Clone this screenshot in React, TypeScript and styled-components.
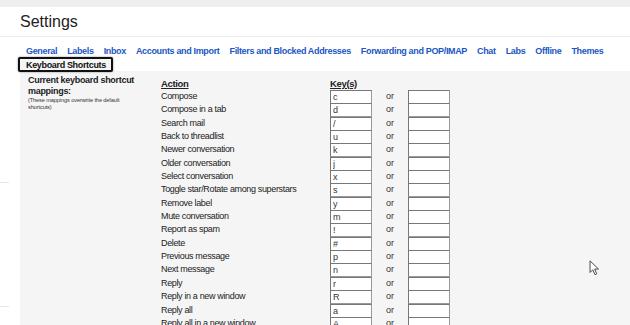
import styled, { createGlobalStyle } from 'styled-components';

const shortcuts: [string, string][] = [
  ['Compose', 'c'],
  ['Compose in a tab', 'd'],
  ['Search mail', '/'],
  ['Back to threadlist', 'u'],
  ['Newer conversation', 'k'],
  ['Older conversation', 'j'],
  ['Select conversation', 'x'],
  ['Toggle star/Rotate among superstars', 's'],
  ['Remove label', 'y'],
  ['Mute conversation', 'm'],
  ['Report as spam', '!'],
  ['Delete', '#'],
  ['Previous message', 'p'],
  ['Next message', 'n'],
  ['Reply', 'r'],
  ['Reply in a new window', 'R'],
  ['Reply all', 'a'],
  ['Reply all in a new window', 'A'],
];

const tabs = [
  'General',
  'Labels',
  'Inbox',
  'Accounts and Import',
  'Filters and Blocked Addresses',
  'Forwarding and POP/IMAP',
  'Chat',
  'Labs',
  'Offline',
  'Themes',
];

const GlobalStyle = createGlobalStyle`
  html, body {
    margin: 0;
    padding: 0;
    background: #ffffff;
    font-family: "Liberation Sans", Arial, sans-serif;
    overflow: hidden;
  }
`;

const App = () => {
  return (
    <>
      <GlobalStyle />
      <Page>
        <TopStrip />
        <Header>Settings</Header>
        <TabBar>
          {tabs.map((t) => (
            <TabLink key={t}>{t}</TabLink>
          ))}
        </TabBar>
        <ActiveTabRow>
          <ActiveTab>Keyboard Shortcuts</ActiveTab>
        </ActiveTabRow>
        <Body>
          <Gutter>
            <GutterLine $top={111} />
            <GutterLine $top={235} />
          </Gutter>
          <Panel>
            <Intro>
              <IntroTitle>Current keyboard shortcut mappings:</IntroTitle>
              <IntroNote>(These mappings overwrite the default shortcuts)</IntroNote>
            </Intro>
            <Table>
              <HeadCell>Action</HeadCell>
              <HeadCell>Key(s)</HeadCell>
              <span />
              <span />
              {shortcuts.map(([action, key]) => (
                <Row key={action}>
                  <ActionCell>{action}</ActionCell>
                  <KeyInput defaultValue={key} />
                  <OrCell>or</OrCell>
                  <KeyInput defaultValue="" />
                </Row>
              ))}
            </Table>
            <Cursor viewBox="0 0 12 18" aria-hidden>
              <path
                d="M1 1 L1 14 L4 11 L6.5 16.5 L8.5 15.6 L6.2 10.2 L10.5 10.2 Z"
                fill="#ffffff"
                stroke="#333333"
                strokeWidth="1"
                strokeLinejoin="round"
              />
            </Cursor>
          </Panel>
        </Body>
      </Page>
    </>
  );
};

const Page = styled.div`
  width: 630px;
  height: 325px;
  overflow: hidden;
  display: flex;
  flex-direction: column;
`;

const TopStrip = styled.div`
  height: 7px;
  background: #efefef;
  flex: none;
`;

const Header = styled.div`
  height: 29px;
  flex: none;
  padding-left: 20px;
  display: flex;
  align-items: center;
  font-size: 16px;
  color: #222222;
  border-bottom: 1px solid #ececec;
`;

const TabBar = styled.div`
  flex: none;
  display: flex;
  gap: 10px;
  padding: 7px 0 0 26px;
  height: 13px;
  align-items: center;
`;

const TabLink = styled.span`
  font-size: 9px;
  font-weight: bold;
  color: #1a56c6;
  white-space: nowrap;
  letter-spacing: -0.34px;
`;

const ActiveTabRow = styled.div`
  flex: none;
  padding: 0 0 0 18px;
  height: 14px;
  display: flex;
`;

const ActiveTab = styled.div`
  box-sizing: border-box;
  width: 95px;
  height: 15px;
  border: 2px solid #111111;
  border-radius: 2px;
  box-shadow: 0 0 2px rgba(0, 0, 0, 0.5);
  background: #f5f5f5;
  font-size: 9px;
  font-weight: bold;
  letter-spacing: -0.34px;
  color: #111111;
  padding-left: 6px;
  display: flex;
  align-items: center;
  position: relative;
  z-index: 1;
  white-space: nowrap;
`;

const Body = styled.div`
  flex: 1;
  display: flex;
`;

const Gutter = styled.div`
  width: 20px;
  flex: none;
  position: relative;
`;

const GutterLine = styled.div<{ $top: number }>`
  position: absolute;
  left: 0;
  top: ${({ $top }) => $top}px;
  width: 9px;
  height: 1px;
  background: #e6e6e6;
`;

const Panel = styled.div`
  flex: 1;
  background: #f5f5f5;
  display: flex;
  padding: 4px 0 0 8px;
  position: relative;
`;

const Intro = styled.div`
  width: 133px;
  flex: none;
`;

const IntroTitle = styled.div`
  font-size: 9px;
  font-weight: bold;
  letter-spacing: -0.3px;
  color: #222222;
  line-height: 11px;
  width: 112px;
`;

const IntroNote = styled.div`
  font-size: 5.6px;
  letter-spacing: -0.1px;
  color: #333333;
  line-height: 6.5px;
  width: 104px;
`;

const Table = styled.div`
  display: grid;
  grid-template-columns: 169px 42px 36px 42px;
  grid-auto-rows: 13.35px;
  grid-template-rows: 13px;
  align-content: start;
  padding-top: 2px;
`;

const HeadCell = styled.div`
  font-size: 9.5px;
  font-weight: bold;
  letter-spacing: -0.35px;
  color: #222222;
  text-decoration: underline;
  line-height: 12px;
  align-self: end;
`;

const Row = styled.div`
  display: contents;
`;

const ActionCell = styled.div`
  font-size: 9px;
  letter-spacing: -0.35px;
  color: #222222;
  line-height: 13.35px;
  white-space: nowrap;
`;

const KeyInput = styled.input`
  box-sizing: border-box;
  width: 42px;
  height: 14px;
  margin: 0;
  padding: 0 0 0 2px;
  border: 1px solid #999999;
  border-top-color: #777777;
  border-left-color: #777777;
  background: #ffffff;
  font-family: "Liberation Sans", Arial, sans-serif;
  font-size: 9px;
  color: #333333;
  outline: none;
`;

const OrCell = styled.div`
  font-size: 9px;
  color: #333333;
  line-height: 13.35px;
  padding-left: 14px;
`;

const Cursor = styled.svg`
  position: absolute;
  left: 569px;
  top: 189px;
  width: 11px;
  height: 16px;
`;

export default App;
